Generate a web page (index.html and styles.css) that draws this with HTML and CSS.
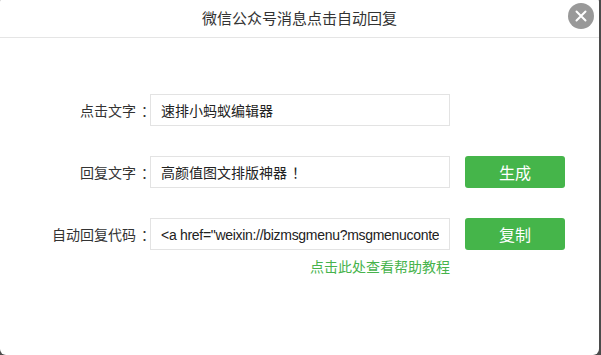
FILE: index.html
```html
<!DOCTYPE html>
<html lang="zh">
<head>
<meta charset="utf-8">
<title>微信公众号消息点击自动回复</title>
<link rel="stylesheet" href="styles.css">
</head>
<body>
<div class="dialog">
  <div class="header">
    <span class="title">微信公众号消息点击自动回复</span>
    <button class="close" aria-label="关闭">
      <svg width="12" height="12" viewBox="0 0 12 12"><path d="M1.5 1.5L10.5 10.5M10.5 1.5L1.5 10.5" stroke="#fff" stroke-width="2" stroke-linecap="round"/></svg>
    </button>
  </div>
  <div class="body">
    <div class="row">
      <label class="label">点击文字<span class="punct">：</span></label>
      <div class="input">速排小蚂蚁编辑器</div>
    </div>
    <div class="row">
      <label class="label">回复文字<span class="punct">：</span></label>
      <div class="input">高颜值图文排版神器<span class="punct">！</span></div>
      <button class="btn">生成</button>
    </div>
    <div class="row">
      <label class="label">自动回复代码<span class="punct">：</span></label>
      <input class="input code" readonly value='&lt;a href="weixin://bizmsgmenu?msgmenucontent=速排小蚂蚁编辑器&amp;msgmenuid=1"&gt;高颜值图文排版神器！&lt;/a&gt;'>
      <button class="btn">复制</button>
    </div>
    <div class="help"><a class="help-link">点击此处查看帮助教程</a></div>
  </div>
</div>
</body>
</html>
```
FILE: styles.css
```css
html, body {
  margin: 0;
  padding: 0;
}
body {
  background: #4b4b4b;
  width: 601px;
  height: 355px;
  overflow: hidden;
  font-family: "Noto Sans CJK SC", "Liberation Sans", sans-serif;
  color: #333;
}
.dialog {
  position: relative;
  width: 599px;
  height: 359px;
  margin-top: -4px;
  background: #fff;
  border-radius: 6px;
  box-sizing: border-box;
}
.header {
  height: 41px;
  border-bottom: 1px solid #e5e5e5;
  display: flex;
  align-items: center;
  justify-content: center;
}
.title {
  font-size: 15px;
  color: #333;
  padding-top: 1px;
}
.close {
  position: absolute;
  top: 7px;
  right: 5px;
  width: 26px;
  height: 26px;
  border-radius: 50%;
  background: #999;
  border: none;
  padding: 0;
  display: flex;
  align-items: center;
  justify-content: center;
}
.body {
  padding-top: 56px;
  display: flex;
  flex-direction: column;
  gap: 30px;
}
.row {
  display: flex;
  align-items: center;
  height: 32px;
}
.label {
  width: 150px;
  text-align: right;
  font-size: 14px;
  color: #333;
  flex: none;
}
.punct {
  margin-left: 5px;
  margin-right: -5px;
}
.input {
  width: 300px;
  height: 32px;
  box-sizing: border-box;
  border: 1px solid #e3e3e3;
  border-radius: 0;
  margin: 0;
  padding: 0 10px;
  font-family: "Noto Sans CJK SC", "Liberation Sans", sans-serif;
  font-size: 14px;
  line-height: 30px;
  color: #222;
  background: #fff;
  white-space: nowrap;
  overflow: hidden;
  flex: none;
  outline: none;
}
.code {
  font-family: "Liberation Sans", "Noto Sans CJK SC", sans-serif;
  letter-spacing: -0.3px;
}
.btn {
  margin-left: 15px;
  width: 100px;
  height: 32px;
  border: none;
  border-radius: 3px;
  background: #45b54a;
  color: #fff;
  font-family: "Noto Sans CJK SC", sans-serif;
  font-size: 16px;
  padding: 0;
}
.help {
  margin-top: -24px;
  width: 450px;
  text-align: right;
  font-size: 14px;
  line-height: 20px;
}
.help-link {
  color: #47b34c;
}
```
